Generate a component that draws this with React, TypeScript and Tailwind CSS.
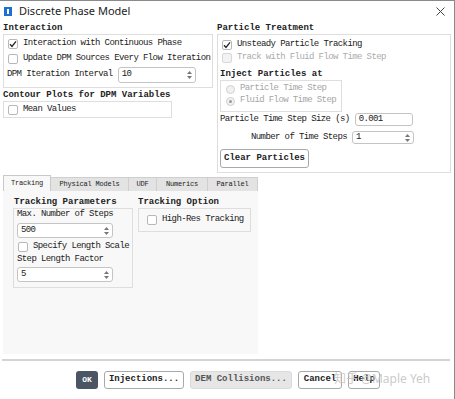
import React from 'react';

const mono = { fontFamily: '"Liberation Mono", "DejaVu Sans Mono", monospace' };

const Check = ({ checked = false, disabled = false }: { checked?: boolean; disabled?: boolean }) => (
  <span
    className={`w-[10px] h-[10px] shrink-0 rounded-[2px] border flex items-center justify-center ${
      disabled ? 'border-[#d8d8d8] bg-[#f2f2f2]' : 'border-[#b8b8b8] bg-white'
    }`}
  >
    {checked && (
      <svg width="8" height="8" viewBox="0 0 8 8">
        <path d="M1 4.2 L3 6.4 L7 1.4" fill="none" stroke="#222" strokeWidth="1.3" />
      </svg>
    )}
  </span>
);

const Radio = ({ on = false }: { on?: boolean }) => (
  <span className="w-[9px] h-[9px] shrink-0 rounded-full border border-[#cfcfcf] bg-[#f1f1f1] flex items-center justify-center">
    {on && <span className="w-[3px] h-[3px] rounded-full bg-[#9a9a9a]" />}
  </span>
);

const Spin = () => (
  <span className="flex flex-col items-center gap-[2px] mr-[3px]">
    <svg width="5" height="3" viewBox="0 0 5 3">
      <path d="M0 3 L2.5 0 L5 3 Z" fill="#777" />
    </svg>
    <svg width="5" height="3" viewBox="0 0 5 3">
      <path d="M0 0 L2.5 3 L5 0 Z" fill="#777" />
    </svg>
  </span>
);

const Field = ({ value, w, h, spin = false }: { value: string; w: string; h: string; spin?: boolean }) => (
  <div className={`${w} ${h} border border-[#c4c4c4] rounded-[3px] bg-white flex items-center justify-between pl-[3px]`}>
    <span>{value}</span>
    {spin && <Spin />}
  </div>
);

const Row = ({ children, h = 'h-[12px]', cls = '' }: { children: React.ReactNode; h?: string; cls?: string }) => (
  <div className={`${h} flex items-center gap-[5px] ${cls}`}>{children}</div>
);

const Heading = ({ children, cls = '' }: { children: React.ReactNode; cls?: string }) => (
  <div className={`h-[11px] leading-[11px] font-bold tracking-normal text-[#222] ${cls}`}>{children}</div>
);

export default function App() {
  return (
    <div
      className="w-[455px] h-[399px] bg-white border-t border-r border-[#8a8a8a] relative overflow-hidden text-[9px] tracking-[-0.6px] text-[#222]"
      style={mono}
    >
      {/* title bar */}
      <div className="h-[20px] flex items-center pl-[4px] pr-[9px] tracking-normal" style={{ fontFamily: '"Noto Sans", sans-serif' }}>
        <span className="w-[8px] h-[9px] bg-[#1f6fd1] flex items-center justify-center mr-[7px]">
          <span className="w-[2px] h-[5px] bg-white" />
        </span>
        <span className="text-[11px] text-[#222]">Discrete Phase Model</span>
        <svg className="ml-auto" width="9" height="9" viewBox="0 0 9 9">
          <path d="M0.5 0.5 L8.5 8.5 M8.5 0.5 L0.5 8.5" stroke="#444" strokeWidth="1" />
        </svg>
      </div>

      <div className="flex items-start mt-[2px]">
        {/* left column */}
        <div className="w-[217px] shrink-0 pl-[3px]">
          <Heading>Interaction</Heading>
          <div className="w-[210px] h-[54px] border border-[#dedede] pl-[3px] pt-[3px]">
            <Row cls="pl-[1px]">
              <Check checked />
              <span>Interaction with Continuous Phase</span>
            </Row>
            <Row cls="mt-[3px] pl-[1px]">
              <Check />
              <span>Update DPM Sources Every Flow Iteration</span>
            </Row>
            <Row h="h-[16px]" cls="mt-[2px] gap-[3px]">
              <span>DPM Iteration Interval</span>
              <Field value="10" w="w-[78px]" h="h-[16px]" spin />
            </Row>
          </div>
          <Heading cls="mt-[1px] h-[12px] leading-[12px]">Contour Plots for DPM Variables</Heading>
          <div className="w-[169px] h-[17px] border border-[#dedede] pl-[4px] flex items-center">
            <Row>
              <Check />
              <span>Mean Values</span>
            </Row>
          </div>
        </div>

        {/* right column */}
        <div className="flex-1">
          <Heading>Particle Treatment</Heading>
          <div className="w-[234px] h-[139px] border border-[#dedede] pl-[2px] pt-[4px]">
            <Row cls="pl-[2px]">
              <Check checked />
              <span>Unsteady Particle Tracking</span>
            </Row>
            <Row cls="mt-[1px] pl-[2px] text-[#ababab]">
              <Check disabled />
              <span>Track with Fluid Flow Time Step</span>
            </Row>
            <Heading cls="mt-[5px]">Inject Particles at</Heading>
            <div className="w-[122px] h-[32px] border border-[#dedede] pl-[5px] pt-[2px] text-[#a6a6a6]">
              <Row>
                <Radio />
                <span>Particle Time Step</span>
              </Row>
              <Row>
                <Radio on />
                <span>Fluid Flow Time Step</span>
              </Row>
            </div>
            <Row h="h-[13px]" cls="mt-[1px] gap-[4px]">
              <span>Particle Time Step Size (s)</span>
              <Field value="0.001" w="w-[58px]" h="h-[13px]" />
            </Row>
            <Row h="h-[13px]" cls="mt-[5px] gap-[3px] pl-[31px]">
              <span>Number of Time Steps</span>
              <Field value="1" w="w-[62px]" h="h-[13px]" spin />
            </Row>
            <button className="mt-[5px] h-[19px] w-[89px] border border-[#a9a9a9] rounded-[3px] bg-white font-bold tracking-normal text-[9px] flex items-center justify-center">
              Clear Particles
            </button>
          </div>
        </div>
      </div>

      {/* tabs */}
      <div className="mt-[2px] pl-[3px]">
        <div className="flex items-end h-[16px] text-[7px] tracking-[-0.2px]">
          <div className="w-[48px] h-[16px] bg-[#f8f8f8] border border-b-0 border-[#c9c9c9] flex items-center justify-center">Tracking</div>
          <div className="w-[78px] h-[14px] bg-[#e3e3e3] border-t border-r border-[#cfcfcf] flex items-center justify-center">Physical Models</div>
          <div className="w-[28px] h-[14px] bg-[#e3e3e3] border-t border-r border-[#cfcfcf] flex items-center justify-center">UDF</div>
          <div className="w-[51px] h-[14px] bg-[#e3e3e3] border-t border-r border-[#cfcfcf] flex items-center justify-center">Numerics</div>
          <div className="w-[50px] h-[14px] bg-[#e3e3e3] border-t border-r border-[#cfcfcf] flex items-center justify-center">Parallel</div>
        </div>
        <div className="w-[255px] h-[163px] bg-[#f8f8f8] pl-[10px] pt-[6px] flex gap-[5px]">
          <div>
            <Heading cls="pl-[1px]">Tracking Parameters</Heading>
            <div className="w-[120px] h-[80px] border border-[#dedede] pl-[3px]">
              <Row>
                <span>Max. Number of Steps</span>
              </Row>
              <div className="mt-[2px]">
                <Field value="500" w="w-[96px]" h="h-[15px]" spin />
              </div>
              <Row cls="mt-[3px] gap-[4px] pl-[1px]">
                <Check />
                <span>Specify Length Scale</span>
              </Row>
              <Row cls="mt-[1px]">
                <span>Step Length Factor</span>
              </Row>
              <div className="mt-[1px]">
                <Field value="5" w="w-[96px]" h="h-[15px]" spin />
              </div>
            </div>
          </div>
          <div>
            <Heading>Tracking Option</Heading>
            <div className="w-[113px] h-[24px] border border-[#dedede] pl-[8px] flex items-center">
              <Row cls="gap-[4px]">
                <Check />
                <span>High-Res Tracking</span>
              </Row>
            </div>
          </div>
        </div>
      </div>

      {/* separator */}
      <div className="mt-[5px] ml-[2px] w-[448px] h-[2px] bg-[#d4d4d4]" />

      {/* buttons */}
      <div className="mt-[10px] flex justify-center gap-[6px] pl-[2px] font-bold tracking-normal">
        <button className="w-[22px] h-[18px] rounded-[3px] bg-[#4b5563] text-white text-[8px] flex items-center justify-center">OK</button>
        <button className="w-[80px] h-[18px] rounded-[3px] border border-[#a9a9a9] bg-white text-[9px] flex items-center justify-center">Injections...</button>
        <button className="w-[102px] h-[18px] rounded-[3px] border border-[#dadada] bg-[#e6e6e6] text-[#555] text-[9px] flex items-center justify-center">DEM Collisions...</button>
        <button className="w-[44px] h-[18px] rounded-[3px] border border-[#a9a9a9] bg-white text-[9px] flex items-center justify-center">Cancel</button>
        <button className="w-[32px] h-[18px] rounded-[3px] border border-[#a9a9a9] bg-white text-[9px] flex items-center justify-center">Help</button>
      </div>

      {/* watermark */}
      <div
        className="absolute left-[334px] top-[369px] text-[12px] tracking-normal text-[#c4c4c4]/90 pointer-events-none"
        style={{ fontFamily: '"Noto Sans", "Noto Sans CJK SC", sans-serif' }}
      >
        知乎 @Maple Yeh
      </div>
    </div>
  );
}
